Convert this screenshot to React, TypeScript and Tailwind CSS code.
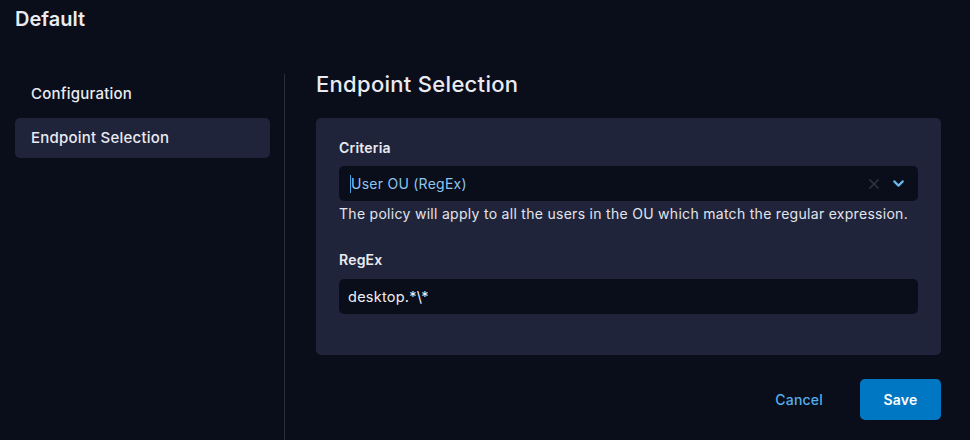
import { ChevronDown, X } from 'lucide-react';

const font = { fontFamily: 'Inter, "Noto Sans", sans-serif' };

const SideItem = ({ label, active }: { label: string; active?: boolean }) => (
  <div
    className={`h-10 flex items-center px-4 rounded-[5px] text-[15px] font-medium tracking-[0.22px] text-[#e9ebf1] ${
      active ? 'bg-[#20243a]' : ''
    }`}
  >
    {label}
  </div>
);

const App = () => {
  return (
    <div className="w-[970px] h-[440px] bg-[#0a0d1a] overflow-hidden text-[#e9ebf1]" style={font}>
      <div className="pl-[15px] pt-[5px]">
        <h1 className="text-[20px] leading-7 font-semibold">Default</h1>
      </div>

      <div className="flex mt-[41px] h-[366px]">
        <div className="w-[255px] ml-[15px] flex flex-col gap-1">
          <SideItem label="Configuration" />
          <SideItem label="Endpoint Selection" active />
        </div>

        <div className="w-px bg-[#2c2e36] ml-[14px]"></div>

        <div className="ml-[31px] w-[625px]">
          <h2 className="text-[22px] leading-[20px] font-medium tracking-[0.3px]">Endpoint Selection</h2>

          <div className="mt-6 bg-[#20243a] rounded-[5px] px-[23px] pt-5 pb-[41px]">
            <label className="block text-sm leading-5 font-semibold tracking-[0.2px]">Criteria</label>
            <div className="mt-2 h-[35px] bg-[#0a0d1a] rounded-[5px] flex items-center pl-[11px] pr-[11px]">
              <span className="w-px h-[18px] bg-[#4aa3e0]"></span>
              <span className="text-sm tracking-[0.25px] text-[#8cc6ee]">User OU (RegEx)</span>
              <div className="ml-auto flex items-center gap-[8px]">
                <X className="w-4 h-4 text-[#30333e]" strokeWidth={2.5} />
                <ChevronDown className="w-[17px] h-[17px] text-[#6ab8ef]" strokeWidth={3} />
              </div>
            </div>
            <p className="mt-[3px] text-sm leading-5 tracking-[0.29px] text-[#e2e5ec]">
              The policy will apply to all the users in the OU which match the regular expression.
            </p>

            <label className="block mt-[26px] text-sm leading-5 font-semibold tracking-[0.2px]">RegEx</label>
            <div className="mt-[9px] h-[35px] bg-[#0a0d1a] rounded-[5px] flex items-center px-[9px]">
              <span className="text-[14.5px] tracking-[0.25px] text-[#eceef3]">desktop.*\*</span>
            </div>
          </div>

          <div className="mt-6 flex justify-end items-center gap-[21px]">
            <button className="h-[41px] px-4 text-sm font-medium tracking-[0.2px] text-[#55aeea]">Cancel</button>
            <button className="h-[41px] w-[81px] rounded-[5px] bg-[#0077c2] text-sm font-semibold tracking-[0.2px] text-white">
              Save
            </button>
          </div>
        </div>
      </div>
    </div>
  );
};

export default App;
